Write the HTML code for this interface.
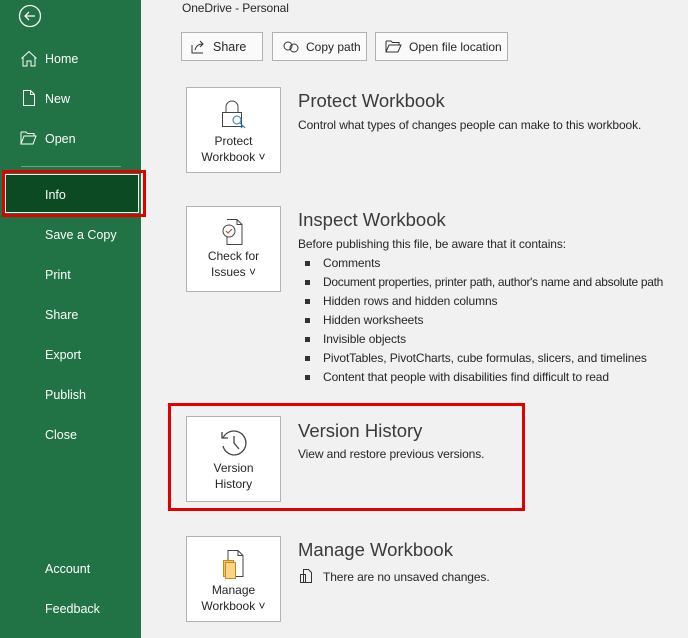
<!DOCTYPE html>
<html><head><meta charset="utf-8"><style>
*{margin:0;padding:0;box-sizing:border-box}
body{width:688px;height:638px;background:#f1f1f1;font-family:"Liberation Sans",sans-serif;color:#262626;position:relative;overflow:hidden}
.side{position:absolute;left:0;top:0;width:141px;height:638px;background:#217346}
.nav{position:absolute;left:45px;color:#fff;font-size:12.5px}
.ic{position:absolute;left:20px}
.sep{position:absolute;left:21px;top:166px;width:100px;height:1px;background:#6fa382}
.info{position:absolute;left:5px;top:174px;width:134px;height:39px;background:#0b4a23;border:1px solid #e8f0ea}
.redinfo{position:absolute;left:2px;top:170px;width:144px;height:47px;border:3px solid #e00000}
.t{position:absolute;font-size:12px;white-space:nowrap;letter-spacing:-0.1px}
.btn{position:absolute;top:32px;height:29px;border:1px solid #b0b0b0;background:#fafafa;font-size:12.5px;display:flex;align-items:center;padding-left:9px;gap:6px;white-space:nowrap}
.tile{position:absolute;left:186px;width:95px;height:86px;border:1px solid #b3b3b3;background:#fff;text-align:center;font-size:12px;line-height:16px}
.tile svg{display:block;margin:10px auto 1px}
.h{position:absolute;left:298px;font-size:18.5px;color:#3a3a3a;white-space:nowrap}
.b{position:absolute;left:305px;width:5px;height:5px;background:#333}
</style></head><body>
<div class="side">
<svg class="ic" style="left:18px;top:4px" width="24" height="24" viewBox="0 0 24 24" fill="none" stroke="#fff" stroke-width="1.3"><circle cx="12" cy="12" r="10.5"/><path d="M17 12H7M11 8l-4 4 4 4"/></svg>
<svg class="ic" style="top:50px" width="18" height="18" viewBox="0 0 18 18" fill="none" stroke="#fff" stroke-width="1"><path d="M1.5 8.5L9 1.5l7.5 7M3 7v9h4v-5h4v5h4V7"/></svg>
<div class="nav" style="top:52px">Home</div>
<svg class="ic" style="top:89px" width="18" height="18" viewBox="0 0 18 18" fill="none" stroke="#fff" stroke-width="1"><path d="M3.5 1.5h7l4 4v11h-11zM10.5 1.5v4h4"/></svg>
<div class="nav" style="top:92px">New</div>
<svg class="ic" style="top:130px" width="18" height="16" viewBox="0 0 18 16" fill="none" stroke="#fff" stroke-width="1"><path d="M1 2h5l1.5 1.5H14V6M1 2v12h12l3-8H4L1 14"/></svg>
<div class="nav" style="top:132px">Open</div>
<div class="sep"></div>
<div class="info"></div>
<div class="nav" style="top:188px">Info</div>
<div class="nav" style="top:228px">Save a Copy</div>
<div class="nav" style="top:268px">Print</div>
<div class="nav" style="top:308px">Share</div>
<div class="nav" style="top:348px">Export</div>
<div class="nav" style="top:388px">Publish</div>
<div class="nav" style="top:428px">Close</div>
<div class="nav" style="top:562px">Account</div>
<div class="nav" style="top:602px">Feedback</div>
</div>
<div class="redinfo"></div>
<div class="t" style="left:182px;top:1px">OneDrive - Personal</div>
<div class="btn" style="left:181px;width:82px"><svg width="16" height="14" viewBox="0 0 16 14" fill="none" stroke="#333"><path d="M1 5v8h11M4 10c1-4 4-6 8-6M9 1l3 3-3 3"/></svg>Share</div>
<div class="btn" style="left:272px;width:95px;font-size:12px"><svg width="18" height="12" viewBox="0 0 18 12" fill="none" stroke="#333"><circle cx="6" cy="5" r="4"/><circle cx="12" cy="7" r="4"/></svg>Copy path</div>
<div class="btn" style="left:375px;width:133px;font-size:12px"><svg width="18" height="13" viewBox="0 0 18 13" fill="none" stroke="#333"><path d="M1 1h5l1.5 1.5H14V5M1 1v11h12l3-7H4L1 12"/></svg>Open file location</div>

<div class="tile" style="top:87px"><svg width="30" height="34" viewBox="0 0 30 34" fill="none" stroke="#444"><path d="M7 14V9a6 6 0 0112 0v5"/><rect x="3.5" y="14.5" width="19" height="14"/><circle cx="18" cy="22" r="4" fill="#fff" stroke="#1f7fb8"/><path d="M21 25l5 5M24 28l-2 2" stroke="#1f7fb8"/></svg>Protect<br>Workbook ˅</div>
<div class="h" style="top:90px">Protect Workbook</div>
<div class="t" style="left:298px;top:118px">Control what types of changes people can make to this workbook.</div>

<div class="tile" style="top:206px"><svg width="30" height="30" viewBox="0 0 30 30" fill="none" stroke="#444"><path d="M8 2.5h10l5 5v20H8v-8M18 2.5v5h5"/><circle cx="10" cy="14" r="6" fill="#fff"/><path d="M7 14l2 2 4-4" stroke="#d0343a"/></svg>Check for<br>Issues ˅</div>
<div class="h" style="top:209px">Inspect Workbook</div>
<div class="t" style="left:298px;top:237px">Before publishing this file, be aware that it contains:</div>
<div class="b" style="top:261px"></div><div class="t" style="left:323px;top:256px">Comments</div>
<div class="b" style="top:280px"></div><div class="t" style="left:323px;top:275px;letter-spacing:-0.3px">Document properties, printer path, author's name and absolute path</div>
<div class="b" style="top:299px"></div><div class="t" style="left:323px;top:294px">Hidden rows and hidden columns</div>
<div class="b" style="top:318px"></div><div class="t" style="left:323px;top:313px">Hidden worksheets</div>
<div class="b" style="top:337px"></div><div class="t" style="left:323px;top:332px">Invisible objects</div>
<div class="b" style="top:356px"></div><div class="t" style="left:323px;top:351px">PivotTables, PivotCharts, cube formulas, slicers, and timelines</div>
<div class="b" style="top:375px"></div><div class="t" style="left:323px;top:370px">Content that people with disabilities find difficult to read</div>

<div style="position:absolute;left:168px;top:403px;width:357px;height:108px;border:3px solid #e00000"></div>
<div class="tile" style="top:416px"><svg width="32" height="32" viewBox="0 0 32 32" fill="none" stroke="#444" stroke-width="1.3"><path d="M5 11A12 12 0 1116 28a12 12 0 01-11-9"/><path d="M4 5v6h6M16 9v7l5 6"/></svg>Version<br>History</div>
<div class="h" style="top:420px">Version History</div>
<div class="t" style="left:298px;top:447px">View and restore previous versions.</div>

<div class="tile" style="top:536px"><svg width="30" height="34" viewBox="0 0 30 34" fill="none" stroke="#444"><path d="M9 3.5h10l5 5v21H9zM19 3.5v5h5"/><rect x="4.5" y="13.5" width="10" height="16" fill="#f5c36b" stroke="#c98a16"/><rect x="6.5" y="15.5" width="10" height="16" fill="#fbd48a" stroke="#c98a16"/></svg>Manage<br>Workbook ˅</div>
<div class="h" style="top:539px">Manage Workbook</div>
<svg style="position:absolute;left:299px;top:568px" width="14" height="16" viewBox="0 0 14 16" fill="none" stroke="#333"><path d="M4.5 1.5h5l3 3v10h-8zM1.5 6.5h5v8h-5z"/></svg>
<div class="t" style="left:323px;top:570px">There are no unsaved changes.</div>
</body></html>
